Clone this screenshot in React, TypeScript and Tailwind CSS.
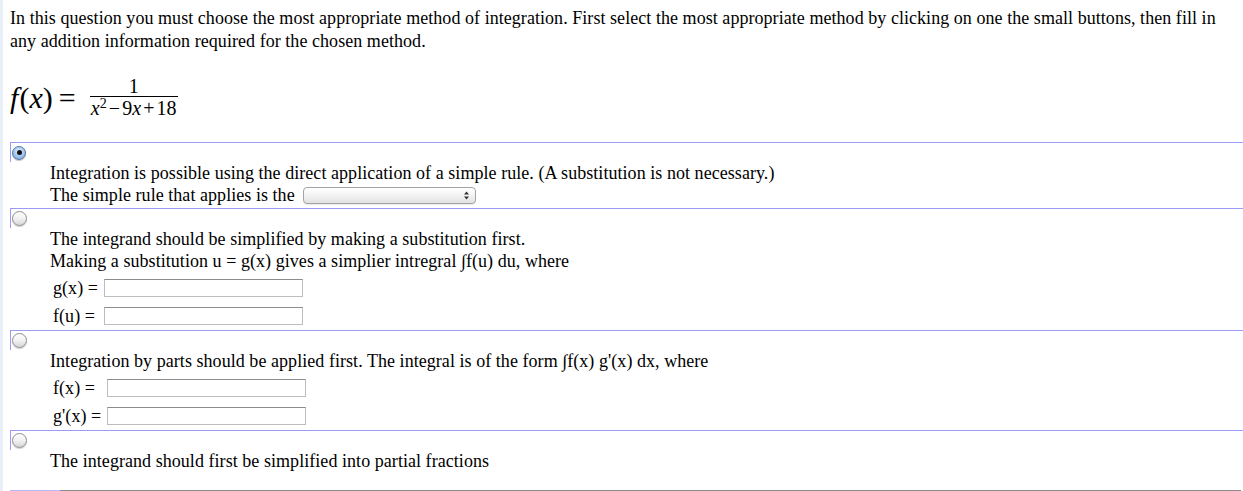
import React from "react";

function Radio({ checked }: { checked?: boolean }) {
  if (checked) {
    return (
      <span className="relative inline-flex h-[14px] w-[14px] items-center justify-center rounded-full border border-[#56739e] bg-[radial-gradient(circle_at_50%_35%,#eef5fd_0%,#a9cbf1_45%,#6f9fdc_100%)] shadow-[0_1px_1px_rgba(0,0,0,0.25)]">
        <span className="h-[5px] w-[5px] rounded-full bg-[#111]" />
      </span>
    );
  }
  return (
    <span className="inline-block h-[15px] w-[15px] rounded-full border border-[#8e8e8e] bg-[linear-gradient(to_bottom,#ffffff_0%,#f1f1f1_50%,#d6d6d6_100%)] shadow-[0_1px_1px_rgba(0,0,0,0.2)]" />
  );
}

function Box({ checked, children, className = "" }: { checked?: boolean; children: React.ReactNode; className?: string }) {
  return (
    <div className={"border-t border-[#9b9bf6] " + className}>
      <div className="flex h-[19px] items-center border-l border-[#9b9bf6] pl-[1px]">
        <Radio checked={checked} />
      </div>
      <div className="pl-[40px] leading-[22px]">{children}</div>
    </div>
  );
}

function Field({ label }: { label: string }) {
  return (
    <>
      <div className="flex h-[28px] items-center pl-[3px] pr-[6px] whitespace-nowrap">{label}</div>
      <div className="flex h-[28px] items-center">
        <span className="block h-[18px] w-[199px] border border-[#bdbdbd] border-t-[#8c8c8c] bg-white" />
      </div>
    </>
  );
}

export default function App() {
  return (
    <div
      className="min-h-[491px] border-l-[3px] border-[#e9eff8] bg-white pl-[7px] text-[18px] tracking-[0.05px] text-black"
      style={{ fontFamily: '"Liberation Serif", "Times New Roman", serif' }}
    >
      <p className="pt-[7px] pr-[12px] leading-[23px]">
        In this question you must choose the most appropriate method of integration. First select the most appropriate method by clicking on one the small buttons, then fill in any addition information required for the chosen method.
      </p>

      <div className="mt-[23px] mb-[23px] flex h-[43px] items-center">
        <span className="text-[30px] leading-none">
          <i className="mr-[1px]">f</i>(<i>x</i>)
        </span>
        <span className="ml-[6px] mr-[14px] text-[30px] leading-none">=</span>
        <span className="inline-flex flex-col items-center">
          <span className="block text-[20px] leading-[20px]">1</span>
          <span className="block h-px w-full bg-black" />
          <span className="block px-[1px] text-[20px] leading-[22px] whitespace-nowrap">
            <i>x</i>
            <sup className="text-[14px]">2</sup>
            <span className="mx-[2px]">−</span>9<i>x</i>
            <span className="mx-[2px]">+</span>18
          </span>
        </span>
      </div>

      <Box checked className="pb-[2px]">
        <div>Integration is possible using the direct application of a simple rule. (A substitution is not necessary.)</div>
        <div className="flex items-center">
          <span>The simple rule that applies is the</span>
          <span className="ml-[8px] flex h-[17px] w-[173px] items-center justify-end rounded-[4px] border border-[#a3a3a3] bg-[linear-gradient(to_bottom,#ffffff_0%,#f3f3f3_50%,#e2e2e2_100%)] pr-[6px] shadow-[0_1px_0_rgba(0,0,0,0.08)]">
            <svg width="5" height="9" viewBox="0 0 5 9">
              <path d="M0 3.5 L2.5 0.5 L5 3.5 Z" fill="#333" />
              <path d="M0 5.5 L2.5 8.5 L5 5.5 Z" fill="#333" />
            </svg>
          </span>
        </div>
      </Box>

      <Box>
        <div>The integrand should be simplified by making a substitution first.</div>
        <div>Making a substitution u = g(x) gives a simplier intregral ∫f(u) du, where</div>
        <div className="mt-[2px] grid w-max grid-cols-[auto_auto]">
          <Field label="g(x) =" />
          <Field label="f(u) =" />
        </div>
      </Box>

      <Box>
        <div>Integration by parts should be applied first. The integral is of the form ∫f(x) g'(x) dx, where</div>
        <div className="mt-[2px] grid w-max grid-cols-[auto_auto]">
          <Field label="f(x) =" />
          <Field label="g'(x) =" />
        </div>
      </Box>

      <Box className="pb-[18px]">
        <div>The integrand should first be simplified into partial fractions</div>
      </Box>

      <div className="flex pr-[2px]">
        <span className="h-px w-[50px] bg-[#b9b9f7]" />
        <span className="h-px flex-1 bg-[#8a8a8a]" />
      </div>
    </div>
  );
}
